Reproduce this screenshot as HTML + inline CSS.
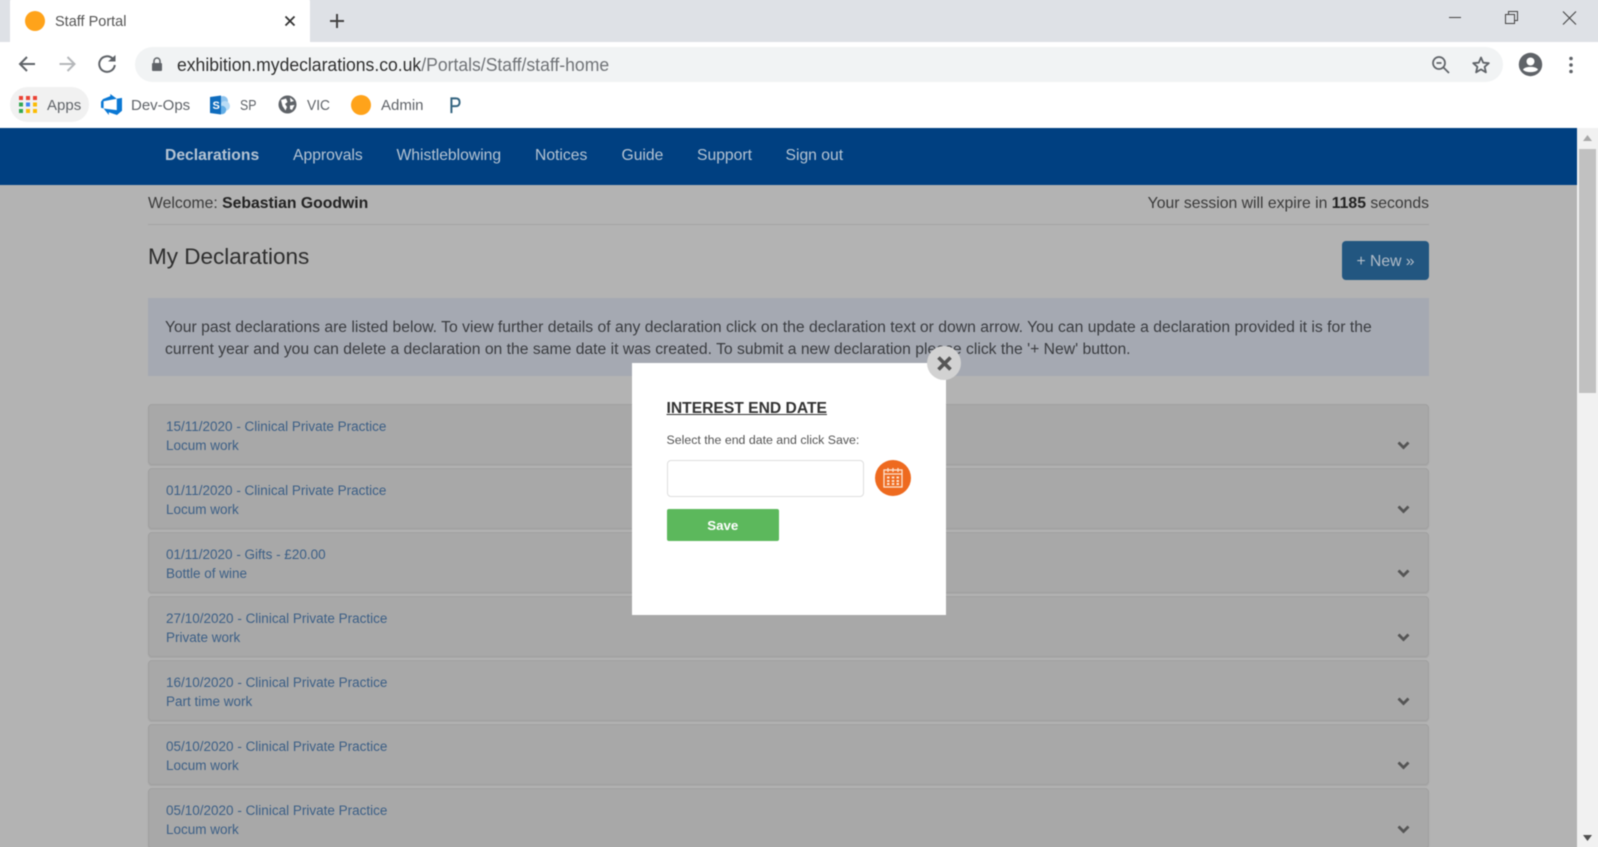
<!DOCTYPE html>
<html>
<head>
<meta charset="utf-8">
<title>Staff Portal</title>
<style>
html,body{margin:0;padding:0;width:1598px;height:847px;overflow:hidden;background:#fff}
body{font-family:"Liberation Sans",sans-serif;position:relative}
#w{position:absolute;left:0;top:0;width:1598px;height:847px;filter:blur(.45px)}
.a{position:absolute;white-space:nowrap}
.nav{top:146px;font-size:15.700px;line-height:20px;color:#b5c4d3}
.chrome{color:#5f6368;font-size:15px;line-height:18px}
.it{position:absolute;left:148px;width:1279px;height:59px;background:#a8a8a8;border:1px solid #a0a0a0;border-radius:4px;box-shadow:0 1px 1px rgba(0,0,0,.08)}
.it div{position:absolute;left:17px;font-size:13.500px;line-height:18px;color:#3c5f86;white-space:nowrap}
.it .l1{top:13px}.it .l2{top:32px}
.it svg{position:absolute;left:1248px;top:36px}
</style>
</head>
<body>
<div id="w">
<!-- tab strip -->
<div class="a" style="left:-6px;top:-6px;width:1610px;height:48px;background:#dee1e6"></div>
<div class="a" style="left:10px;top:-6px;width:300px;height:48px;background:#fff;border-radius:8px 8px 0 0"></div>
<div class="a" style="left:25px;top:11px;width:20px;height:20px;border-radius:50%;background:#ffa31a"></div>
<div class="a chrome" style="left:55px;top:12.500px;font-size:14.500px;color:#555">Staff Portal</div>
<svg class="a" style="left:284px;top:15px" width="12" height="12"><path d="M1.500 1.500L10.500 10.500M10.500 1.500L1.500 10.500" stroke="#333" stroke-width="1.800"/></svg>
<svg class="a" style="left:329px;top:13px" width="16" height="16"><path d="M8 1V15M1 8H15" stroke="#444" stroke-width="2"/></svg>
<svg class="a" style="left:1448px;top:10px" width="150" height="16" fill="none" stroke="#444">
<path d="M1 7.500H13"/>
<path d="M57.500 4.500H66.500V13.500H57.500ZM60.500 4.500V1.500H69.500V10.500H66.500"/>
<path d="M115 1.500L128 14.500M128 1.500L115 14.500" stroke-width="1.100"/>
</svg>
<!-- toolbar -->
<div class="a" style="left:-6px;top:42px;width:1610px;height:86px;background:#fff"></div>
<svg class="a" style="left:17px;top:54px" width="110" height="22" fill="none">
<path d="M18 10H3M10 3L3 10L10 17" stroke="#5f6368" stroke-width="2"/>
<path d="M42.500 10H57.500M50.500 3L57.500 10L50.500 17" stroke="#b5b7ba" stroke-width="2"/>
<path d="M95.500 4.500A7.800 7.800 0 1 0 97.800 11" stroke="#5f6368" stroke-width="2"/>
<path d="M91 7.500H98.500V1z" fill="#5f6368"/>
</svg>
<div class="a" style="left:135px;top:47px;width:1368px;height:35px;border-radius:18px;background:#f1f3f4"></div>
<svg class="a" style="left:151px;top:57px" width="12" height="15"><rect x="1" y="6" width="10" height="8" rx="1" fill="#5f6368"/><path d="M3 6.500V4a3 3 0 0 1 6 0V6.500" fill="none" stroke="#5f6368" stroke-width="1.500"/></svg>
<div class="a" style="left:177px;top:54px;font-size:18.500px;line-height:22px;color:#2f2f2f;transform:scaleX(.95);transform-origin:0 0">exhibition.mydeclarations.co.uk<span style="color:#6f7276">/Portals/Staff/staff-home</span></div>
<svg class="a" style="left:1431px;top:55px" width="20" height="20" fill="none" stroke="#5f6368" stroke-width="1.700"><circle cx="8" cy="8" r="6"/><path d="M5.500 8H10.500M12.500 12.500L18 18"/></svg>
<svg class="a" style="left:1470px;top:54px" width="22" height="22"><path d="M11 3.500L13.200 8.700L18.800 9.200L14.600 12.800L15.900 18.300L11 15.400L6.100 18.300L7.400 12.800L3.200 9.200L8.800 8.700Z" fill="none" stroke="#5f6368" stroke-width="1.800" stroke-linejoin="round"/></svg>
<svg class="a" style="left:1518px;top:52px" width="25" height="25"><circle cx="12.500" cy="12.500" r="11.700" fill="#5f6368"/><circle cx="12.500" cy="9.500" r="4" fill="#fff"/><path d="M5 17.500C7 14 18 14 20 17.500C18 21 7 21 5 17.500Z" fill="#fff"/></svg>
<svg class="a" style="left:1567px;top:54px" width="8" height="22" fill="#5f6368"><circle cx="4" cy="4.500" r="1.800"/><circle cx="4" cy="11" r="1.800"/><circle cx="4" cy="17.500" r="1.800"/></svg>
<!-- bookmarks -->
<div class="a" style="left:10px;top:87px;width:79px;height:35px;border-radius:18px;background:#f1f1f1"></div>
<svg class="a" style="left:19px;top:96px" width="18" height="17">
<g fill="#ea4335"><rect width="4" height="4"/><rect x="7" width="4" height="4"/><rect x="14" width="4" height="4"/></g>
<g fill="#fbbc04"><rect x="14" y="6.500" width="4" height="4"/><rect x="7" y="13" width="4" height="4"/><rect x="14" y="13" width="4" height="4"/></g>
<rect x="7" y="6.500" width="4" height="4" fill="#4285f4"/>
<g fill="#34a853"><rect y="6.500" width="4" height="4"/><rect y="13" width="4" height="4"/></g></svg>
<div class="a chrome" style="left:47px;top:96.500px">Apps</div>
<svg class="a" style="left:101px;top:94px" width="21" height="21" viewBox="0 0 24 24"><path d="M0 8.877L2.247 5.910l8.405-3.416V.022l7.370 5.393L2.966 8.338v8.225L0 15.707zm24-4.450v14.651l-5.753 4.900-9.303-3.057v3.056l-5.978-7.416 15.057 1.798V5.415z" fill="#0a78d4"/></svg>
<div class="a chrome" style="left:131px;top:96.500px">Dev-Ops</div>
<svg class="a" style="left:210px;top:95px" width="21" height="20"><circle cx="13" cy="6" r="5" fill="#8fc4ee"/><circle cx="15" cy="11" r="5" fill="#b9dcf6"/><circle cx="12" cy="15" r="4.200" fill="#63aee6"/><path d="M0 2L11 .5V19.500L0 18Z" fill="#0f6cbd"/><text x="2.500" y="14" font-size="11" font-weight="700" fill="#fff" font-family="Liberation Sans">S</text></svg>
<div class="a chrome" style="left:240px;top:96.500px;transform:scaleX(.82);transform-origin:0 0">SP</div>
<svg class="a" style="left:278px;top:95px" width="19" height="19"><circle cx="9.500" cy="9.500" r="9" fill="#5f6368"/><path d="M3 5L8 3.500L9.500 7L7 9L9 12L7.500 15.500L4.500 11ZM12 2.500L16 6L12.500 7ZM12 10.500L16.500 10L14 15L12 14Z" fill="#fff"/></svg>
<div class="a chrome" style="left:307px;top:96.500px;transform:scaleX(.92);transform-origin:0 0">VIC</div>
<div class="a" style="left:351px;top:95px;width:20px;height:20px;border-radius:50%;background:#ffa31a"></div>
<div class="a chrome" style="left:381px;top:96.500px">Admin</div>
<div class="a" style="left:449px;top:92.500px;font-size:22px;line-height:25px;color:#33637f;transform:scaleX(.85);transform-origin:0 0;-webkit-text-stroke:.3px #33637f">P</div>
<!-- page -->
<div class="a" style="left:-6px;top:128px;width:1583px;height:730px;background:#b3b3b3"></div>
<div class="a" style="left:-6px;top:128px;width:1583px;height:57px;background:#004081"></div>
<div class="a nav" style="left:165px;font-weight:700">Declarations</div>
<div class="a nav" style="left:293px">Approvals</div>
<div class="a nav" style="left:396.500px">Whistleblowing</div>
<div class="a nav" style="left:535px">Notices</div>
<div class="a nav" style="left:621.500px">Guide</div>
<div class="a nav" style="left:697px">Support</div>
<div class="a nav" style="left:785.500px">Sign out</div>
<div class="a" style="left:148px;top:194px;font-size:15.750px;line-height:20px;color:#3a3a3a">Welcome: <b style="color:#222">Sebastian Goodwin</b></div>
<div class="a" style="right:169px;top:194px;font-size:15.750px;line-height:20px;color:#3a3a3a">Your session will expire in <b style="color:#222">1185</b> seconds</div>
<div class="a" style="left:148px;top:224px;width:1281px;height:1px;background:#a4a4a4"></div>
<div class="a" style="left:148px;top:243px;font-size:22.500px;line-height:28px;color:#2e2e2e">My Declarations</div>
<div class="a" style="left:1342px;top:241px;width:87px;height:39px;background:#225680;border-radius:4px;color:#b3bdc8;font-size:15.700px;line-height:41px;text-align:center">+ New »</div>
<div class="a" style="left:148px;top:298px;width:1281px;height:78px;background:#a5a9b2"></div>
<div class="a" style="left:165px;top:317px;font-size:15.720px;line-height:21.500px;color:#3a3c40">Your past declarations are listed below. To view further details of any declaration click on the declaration text or down arrow. You can update a declaration provided it is for the<br>current year and you can delete a declaration on the same date it was created. To submit a new declaration please click the '+ New' button.</div>

<div class="it" style="top:404px"><div class="l1">15/11/2020 - Clinical Private Practice</div><div class="l2">Locum work</div><svg width="13" height="9"><path d="M1.500 1.500L6.500 6.500L11.500 1.500" fill="none" stroke="#555" stroke-width="2.800"/></svg></div>
<div class="it" style="top:468px"><div class="l1">01/11/2020 - Clinical Private Practice</div><div class="l2">Locum work</div><svg width="13" height="9"><path d="M1.500 1.500L6.500 6.500L11.500 1.500" fill="none" stroke="#555" stroke-width="2.800"/></svg></div>
<div class="it" style="top:532px"><div class="l1">01/11/2020 - Gifts - £20.00</div><div class="l2">Bottle of wine</div><svg width="13" height="9"><path d="M1.500 1.500L6.500 6.500L11.500 1.500" fill="none" stroke="#555" stroke-width="2.800"/></svg></div>
<div class="it" style="top:596px"><div class="l1">27/10/2020 - Clinical Private Practice</div><div class="l2">Private work</div><svg width="13" height="9"><path d="M1.500 1.500L6.500 6.500L11.500 1.500" fill="none" stroke="#555" stroke-width="2.800"/></svg></div>
<div class="it" style="top:660px"><div class="l1">16/10/2020 - Clinical Private Practice</div><div class="l2">Part time work</div><svg width="13" height="9"><path d="M1.500 1.500L6.500 6.500L11.500 1.500" fill="none" stroke="#555" stroke-width="2.800"/></svg></div>
<div class="it" style="top:724px"><div class="l1">05/10/2020 - Clinical Private Practice</div><div class="l2">Locum work</div><svg width="13" height="9"><path d="M1.500 1.500L6.500 6.500L11.500 1.500" fill="none" stroke="#555" stroke-width="2.800"/></svg></div>
<div class="it" style="top:788px"><div class="l1">05/10/2020 - Clinical Private Practice</div><div class="l2">Locum work</div><svg width="13" height="9"><path d="M1.500 1.500L6.500 6.500L11.500 1.500" fill="none" stroke="#555" stroke-width="2.800"/></svg></div>

<!-- scrollbar -->
<div class="a" style="left:1577px;top:128px;width:27px;height:730px;background:#f1f1f1"></div>
<div class="a" style="left:1579px;top:149px;width:17px;height:244px;background:#c1c1c1"></div>
<svg class="a" style="left:1582px;top:134px" width="11" height="8"><path d="M5.500 1L10 7H1Z" fill="#a8a8a8"/></svg>
<svg class="a" style="left:1582px;top:834px" width="11" height="8"><path d="M5.500 7L10 1H1Z" fill="#505050"/></svg>
<!-- modal -->
<div class="a" style="left:632px;top:363px;width:314px;height:251.500px;background:#fff"></div>
<div class="a" style="left:666.500px;top:400px;font-size:15.650px;line-height:18px;font-weight:700;color:#333;text-decoration:underline">INTEREST END DATE</div>
<div class="a" style="left:666.500px;top:432px;font-size:12.350px;line-height:16px;color:#555">Select the end date and click Save:</div>
<div class="a" style="left:666.500px;top:460px;width:195.500px;height:35px;border:1.500px solid #dedede;border-radius:4px;background:#fff"></div>
<svg class="a" style="left:875px;top:460px" width="36" height="36"><circle cx="18" cy="18" r="18" fill="#ee6a1f"/><g fill="none" stroke="#fde3d0" stroke-width="1.300"><rect x="9" y="10" width="18" height="17"/><path d="M9 14H27M13 8V12M18 8V12M23 8V12"/></g><g fill="#fde3d0"><rect x="12" y="16.500" width="2.500" height="2"/><rect x="16.800" y="16.500" width="2.500" height="2"/><rect x="21.500" y="16.500" width="2.500" height="2"/><rect x="12" y="20" width="2.500" height="2"/><rect x="16.800" y="20" width="2.500" height="2"/><rect x="21.500" y="20" width="2.500" height="2"/><rect x="12" y="23" width="2.500" height="2"/><rect x="16.800" y="23" width="2.500" height="2"/><rect x="21.500" y="23" width="2.500" height="2"/></g></svg>
<div class="a" style="left:666.500px;top:509px;width:112.500px;height:32px;background:#5cb85c;border-radius:2px;color:#fff;font-size:13.300px;font-weight:700;line-height:33px;text-align:center">Save</div>
<div class="a" style="left:927px;top:346px;width:34px;height:34px;border-radius:50%;background:#d2d2d2"></div>
<svg class="a" style="left:936px;top:355px" width="17" height="17"><path d="M2.500 2.500L14.500 14.500M14.500 2.500L2.500 14.500" stroke="#555" stroke-width="3.600"/></svg>
</div>
</body>
</html>
